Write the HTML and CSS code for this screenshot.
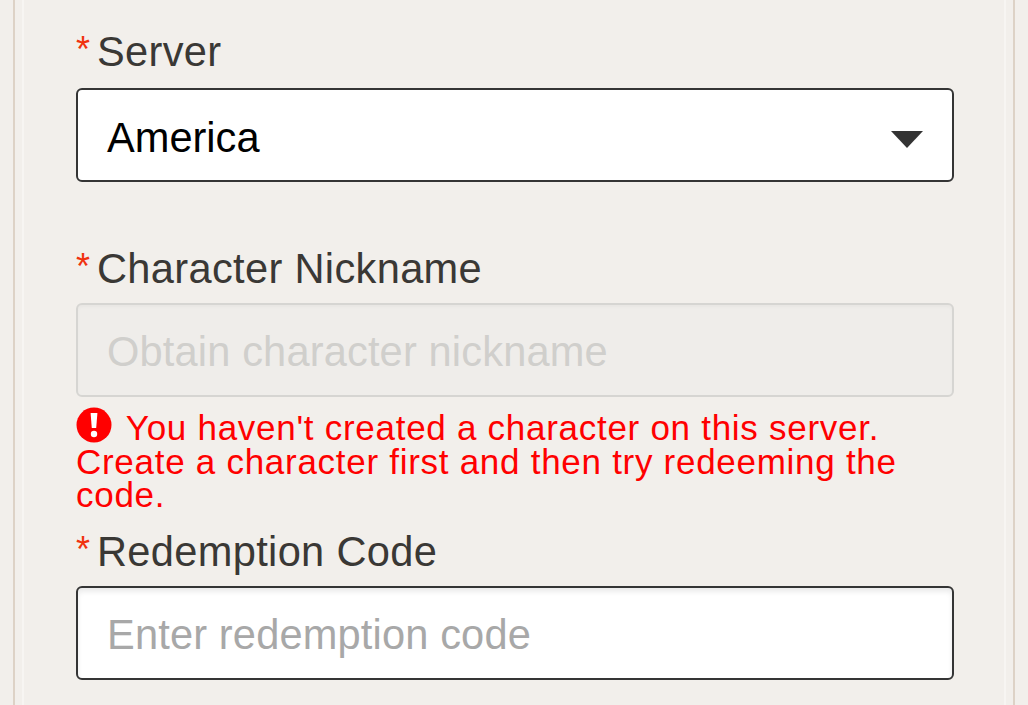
FILE: index.html
```html
<!DOCTYPE html>
<html lang="en">
<head>
<meta charset="utf-8">
<title>Redeem code</title>
<link rel="stylesheet" href="styles.css">
</head>
<body>
<div class="frame-outer">
  <div class="frame-inner">
    <form class="form">
      <div class="field field-server">
        <div class="label"><span class="star">*</span><span>Server</span></div>
        <div class="control select">
          <span class="value">America</span>
          <svg class="caret" width="34" height="20" viewBox="0 0 34 20"><path d="M1 1H33L17 18Z" fill="#333"/></svg>
        </div>
      </div>
      <div class="field field-nick">
        <div class="label"><span class="star">*</span><span>Character Nickname</span></div>
        <div class="control disabled"><span class="placeholder-disabled">Obtain character nickname</span></div>
        <div class="error">
          <svg class="error-icon" width="36" height="36" viewBox="0 0 36 36"><circle cx="18" cy="18" r="17.5" fill="#f00"/><path d="M14.6 6H21.4L20.2 21H15.8Z" fill="#fff"/><circle cx="18" cy="27" r="3.2" fill="#fff"/></svg>
          You haven't created a character on this server. Create a character first and then try redeeming the code.
        </div>
      </div>
      <div class="field field-code">
        <div class="label"><span class="star">*</span><span>Redemption Code</span></div>
        <div class="control input"><span class="placeholder">Enter redemption code</span></div>
      </div>
    </form>
  </div>
</div>
</body>
</html>
```

FILE: styles.css
```css
* { box-sizing: border-box; }
html, body { margin: 0; height: 705px; overflow: hidden; background: #f2efeb; }
body { font-family: "Liberation Sans", Arial, sans-serif; }
.frame-outer {
  height: 705px;
  margin: 0 13px;
  border-left: 2px solid #ddd2c6;
  border-right: 2px solid #ddd2c6;
  padding: 0 7px;
}
.frame-inner {
  height: 705px;
  border-left: 2px solid #f7f5f2;
  border-right: 2px solid #f7f5f2;
  padding: 0 50px 0 52px;
}
.form { display: flex; flex-direction: column; }
.field-server { padding-top: 27px; }
.field-nick { padding-top: 62px; }
.field-code { padding-top: 15px; }
.label {
  display: flex;
  align-items: flex-start;
  height: 50px;
  font-size: 41.6px;
  line-height: 50px;
  color: #3a3835;
  letter-spacing: 0.33px;
  white-space: nowrap;
}
.star {
  width: 21px;
  color: #f0320f;
  font-size: 36px;
  line-height: 40px;
  padding-top: 3px;
}
.field-server .label { margin-bottom: 11px; }
.field-nick .label { margin-bottom: 9px; }
.field-code .label { margin-bottom: 9px; }
.control {
  display: flex;
  align-items: center;
  height: 94px;
  padding: 3px 29px 0;
  border-radius: 6px;
  font-size: 41.6px;
  letter-spacing: 0.15px;
  background: #fff;
  border: 2px solid #353535;
}
.select { justify-content: space-between; padding-top: 5px; }
.value { color: #000; letter-spacing: 0; }
.caret { margin-top: 5px; margin-right: -1px; }
.disabled {
  background: #efedea;
  border-color: #d6d5d2;
  box-shadow: inset 0 2px 3px rgba(0,0,0,0.03);
}
.placeholder-disabled { color: #d0cfcc; }
.input { padding-top: 5px; box-shadow: inset 0 4px 5px rgba(0,0,0,0.08); }
.placeholder { color: #a8a8a8; }
.error {
  margin-top: 14px;
  color: #f00;
  font-size: 35px;
  line-height: 33.5px;
  letter-spacing: 0.72px;
}
.error-icon { vertical-align: 5px; margin: -8px 4px -8px 0; }
```
